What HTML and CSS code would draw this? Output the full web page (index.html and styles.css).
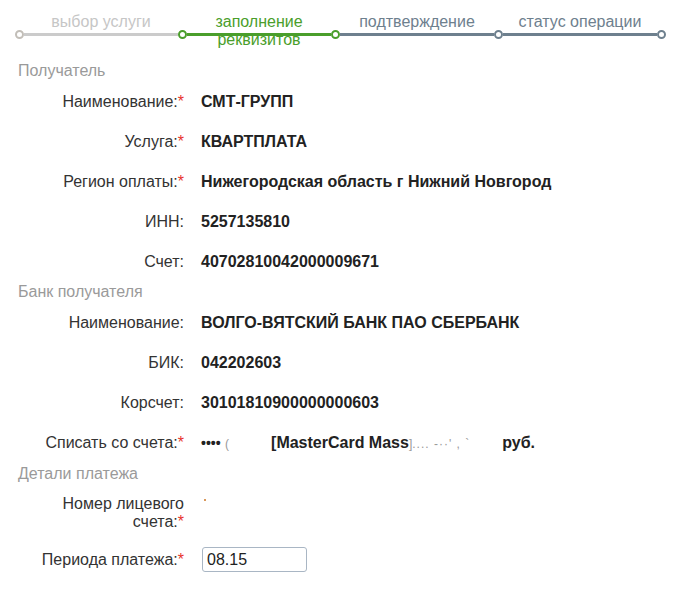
FILE: index.html
```html
<!DOCTYPE html>
<html lang="ru">
<head>
    <meta charset="UTF-8">
    <title>Оплата услуг</title>
    <link rel="stylesheet" href="styles.css">
</head>
<body>
    <div class="steps">
        <span class="dot dot-past"></span>
        <div class="step step-past">
            <div class="step-label">выбор услуги</div>
            <div class="step-line"></div>
        </div>
        <span class="dot dot-current"></span>
        <div class="step step-current step-short">
            <div class="step-label">заполнение реквизитов</div>
            <div class="step-line"></div>
        </div>
        <span class="dot dot-current"></span>
        <div class="step step-next">
            <div class="step-label">подтверждение</div>
            <div class="step-line"></div>
        </div>
        <span class="dot dot-next"></span>
        <div class="step step-next">
            <div class="step-label">статус операции</div>
            <div class="step-line"></div>
        </div>
        <span class="dot dot-next"></span>
    </div>

    <form class="payment">
        <div class="section-title">Получатель</div>
        <div class="row">
            <div class="label">Наименование:<span class="req">*</span></div>
            <div class="value">СМТ-ГРУПП</div>
        </div>
        <div class="row">
            <div class="label">Услуга:<span class="req">*</span></div>
            <div class="value">КВАРТПЛАТА</div>
        </div>
        <div class="row">
            <div class="label">Регион оплаты:<span class="req">*</span></div>
            <div class="value">Нижегородская область г Нижний Новгород</div>
        </div>
        <div class="row">
            <div class="label">ИНН:</div>
            <div class="value">5257135810</div>
        </div>
        <div class="row">
            <div class="label">Счет:</div>
            <div class="value">40702810042000009671</div>
        </div>

        <div class="section-title">Банк получателя</div>
        <div class="row">
            <div class="label">Наименование:</div>
            <div class="value">ВОЛГО-ВЯТСКИЙ БАНК ПАО СБЕРБАНК</div>
        </div>
        <div class="row">
            <div class="label">БИК:</div>
            <div class="value">042202603</div>
        </div>
        <div class="row">
            <div class="label">Корсчет:</div>
            <div class="value">30101810900000000603</div>
        </div>
        <div class="row">
            <div class="label">Списать со счета:<span class="req">*</span></div>
            <div class="value">
                <span class="card-dots">••••</span> <span class="frag">(</span><span class="card-name">[MasterCard Mass<span class="frag">]</span></span><span class="frag frag-tail">.... -··' , `</span>руб.
            </div>
        </div>

        <div class="section-title">Детали платежа</div>
        <div class="row row-wrap">
            <div class="label">Номер лицевого счета:<span class="req">*</span></div>
            <div class="value"><span class="speck"></span></div>
        </div>
        <div class="row row-input">
            <label class="label" for="period">Периода платежа:<span class="req">*</span></label>
            <div class="value"><input type="text" id="period" class="field" value="08.15"></div>
        </div>
    </form>
</body>
</html>
```

FILE: styles.css
```css
body {
    margin: 0;
    font-family: "Liberation Sans", Arial, sans-serif;
    font-size: 16px;
    color: #333;
    background-color: #fff;
}
.steps {
    display: flex;
    align-items: flex-start;
    padding: 13px 0 0 15px;
}
.dot {
    flex: none;
    width: 5px;
    height: 5px;
    margin-top: 17px;
    border: 2px solid #6e808e;
    border-radius: 50%;
    background-color: #fff;
}
.dot-past {
    border-color: #c2beb8;
}
.dot-current {
    border-color: #4a9e2b;
}
.step {
    width: 154px;
    text-align: center;
}
.step-short {
    width: 144px;
}
.step-label {
    height: 20px;
    line-height: 18px;
}
.step-line {
    height: 3px;
    background-color: #6e808e;
}
.step-past .step-label {
    color: #c6c6c6;
}
.step-past .step-line {
    background-color: #cbcbcb;
}
.step-current .step-label {
    color: #4a9e2b;
}
.step-current .step-line {
    background-color: #4a9e2b;
}
.step-next .step-label {
    color: #6e808e;
}
.payment {
    margin-top: 22px;
}
.section-title {
    padding: 0 0 1px 18px;
    line-height: 20px;
    color: #9a9a9a;
}
.row {
    display: flex;
    align-items: flex-start;
    padding: 10px 0 10px 34px;
    line-height: 20px;
}
.label {
    flex: none;
    width: 150px;
    text-align: right;
    color: #333;
}
.req {
    color: #e8322b;
}
.value {
    margin-left: 17px;
    font-weight: bold;
    color: #222;
    white-space: nowrap;
}
.card-dots {
    font-size: 14px;
}
.frag {
    font-weight: normal;
    font-size: 12px;
    color: #999;
}
.card-name {
    margin-left: 42px;
}
.frag-tail {
    display: inline-block;
    width: 90px;
    letter-spacing: 1px;
}
.speck {
    display: inline-block;
    width: 2px;
    height: 2px;
    margin: 4px 0 0 3px;
    background-color: #d9985a;
    vertical-align: top;
}
.row-wrap {
    padding: 10px 0 8px 34px;
    line-height: 18px;
}
.row-input {
    align-items: center;
    padding: 8px 0 8px 34px;
}
.field {
    box-sizing: border-box;
    width: 105px;
    height: 25px;
    margin-left: 1px;
    padding: 0 4px;
    border: 1px solid #a9b6c4;
    border-radius: 3px;
    font-family: "Liberation Sans", Arial, sans-serif;
    font-size: 16px;
    color: #222;
}
```
